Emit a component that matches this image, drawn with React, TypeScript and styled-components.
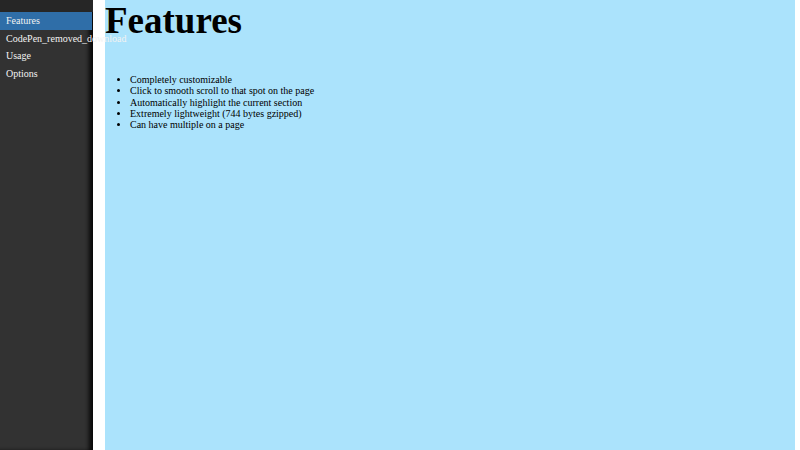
import React from 'react'
import styled, { createGlobalStyle } from 'styled-components'

const GlobalStyle = createGlobalStyle`
  html, body {
    margin: 0;
    padding: 0;
    background: #ffffff;
    font-family: 'Liberation Serif', 'Times New Roman', serif;
  }
`

const Page = styled.div`
  display: flex;
  width: 800px;
  height: 450px;
  overflow: hidden;
`

const Sidebar = styled.nav`
  position: relative;
  z-index: 2;
  flex: 0 0 93px;
  width: 93px;
  background: #323232;
  box-shadow: inset -5px 0 4px -1px rgba(0, 0, 0, 0.85);
  display: flex;
  flex-direction: column;
`

const SidebarTop = styled.div`
  height: 12px;
  background: #262626;
`

const NavItem = styled.a<{ $active?: boolean }>`
  display: block;
  height: 17.5px;
  line-height: 17.5px;
  padding-left: 6px;
  font-size: 10px;
  white-space: nowrap;
  color: #f2f2f2;
  text-decoration: none;
  background: ${({ $active }) => ($active ? '#2f6ea8' : 'transparent')};
  margin-right: ${({ $active }) => ($active ? '1px' : '0')};
`

const Gap = styled.div`
  flex: 0 0 12px;
`

const Content = styled.main`
  flex: 1;
  background: #abe3fc;
  margin-right: 5px;
  color: #000;
`

const Title = styled.h1`
  margin: 0;
  font-size: 37px;
  font-weight: bold;
  line-height: 1.15;
`

const List = styled.ul`
  margin: 31.5px 0 0;
  padding-left: 25px;
  font-size: 10px;
  line-height: 11.3px;
`

const items = ['Features', 'CodePen_removed_download', 'Usage', 'Options']

const features = [
  'Completely customizable',
  'Click to smooth scroll to that spot on the page',
  'Automatically highlight the current section',
  'Extremely lightweight (744 bytes gzipped)',
  'Can have multiple on a page',
]

export default function App() {
  return (
    <>
      <GlobalStyle />
      <Page>
        <Sidebar>
          <SidebarTop />
          {items.map((item, i) => (
            <NavItem key={item} href={`#${item}`} $active={i === 0}>
              {item}
            </NavItem>
          ))}
        </Sidebar>
        <Gap />
        <Content>
          <Title>Features</Title>
          <List>
            {features.map((f) => (
              <li key={f}>{f}</li>
            ))}
          </List>
        </Content>
      </Page>
    </>
  )
}
